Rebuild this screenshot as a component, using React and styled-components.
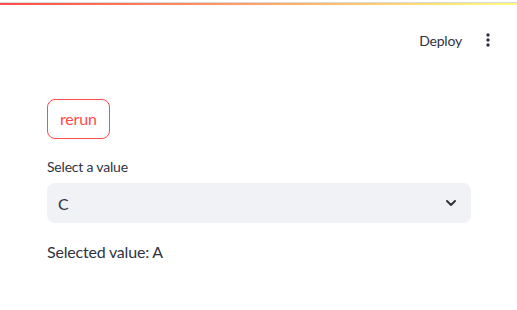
import styled, { createGlobalStyle } from "styled-components";

const Global = createGlobalStyle`
  html, body {
    margin: 0;
    padding: 0;
    background: #ffffff;
  }
  body {
    font-family: "Source Sans Pro", Lato, "Noto Sans", sans-serif;
    color: rgb(49, 51, 63);
    letter-spacing: -0.2px;
  }
`;

const Page = styled.div`
  width: 517px;
  min-height: 310px;
  display: flex;
  flex-direction: column;
`;

const Decoration = styled.div`
  height: 2px;
  margin-top: 2px;
  border-top: 1px solid #d8d8d8;
  background: linear-gradient(90deg, rgb(255, 75, 75), rgb(255, 253, 128));
`;

const Header = styled.header`
  height: 70px;
  display: flex;
  align-items: center;
  justify-content: flex-end;
  padding-right: 17px;
  gap: 6px;
  box-sizing: border-box;
`;

const HeaderButton = styled.button`
  border: none;
  background: none;
  font-family: inherit;
  letter-spacing: inherit;
  font-size: 14px;
  color: rgb(49, 51, 63);
  padding: 4px 8px;
  cursor: pointer;
`;

const Kebab = styled.button`
  border: none;
  background: none;
  width: 24px;
  height: 24px;
  display: flex;
  align-items: center;
  justify-content: center;
  padding: 0;
  color: rgb(49, 51, 63);
`;

const Main = styled.main`
  padding: 24px 46px 0 47px;
  display: flex;
  flex-direction: column;
`;

const RerunButton = styled.button`
  align-self: flex-start;
  height: 40px;
  padding: 0 12px;
  border: 1px solid rgb(255, 75, 75);
  border-radius: 8px;
  background: #ffffff;
  color: rgb(255, 75, 75);
  font-family: inherit;
  letter-spacing: inherit;
  font-size: 16px;
  line-height: 1.6;
`;

const Field = styled.div`
  margin-top: 17px;
  display: flex;
  flex-direction: column;
`;

const Label = styled.label`
  font-size: 14px;
  line-height: 22px;
  margin-bottom: 5px;
`;

const SelectBox = styled.div`
  height: 40px;
  border-radius: 8px;
  background: rgb(240, 242, 246);
  display: flex;
  align-items: center;
  justify-content: space-between;
  padding: 0 14px 0 11px;
  font-size: 16px;
`;

const Result = styled.p`
  margin: 17px 0 0;
  font-size: 16px;
  line-height: 24px;
`;

export default function App() {
  return (
    <Page>
      <Global />
      <Decoration />
      <Header>
        <HeaderButton>Deploy</HeaderButton>
        <Kebab aria-label="Main menu">
          <svg width="4" height="14" viewBox="0 0 4 14">
            <circle cx="2" cy="2" r="1.7" fill="currentColor" />
            <circle cx="2" cy="7" r="1.7" fill="currentColor" />
            <circle cx="2" cy="12" r="1.7" fill="currentColor" />
          </svg>
        </Kebab>
      </Header>
      <Main>
        <RerunButton>rerun</RerunButton>
        <Field>
          <Label>Select a value</Label>
          <SelectBox>
            <span>C</span>
            <svg width="12" height="8" viewBox="0 0 12 8">
              <polyline
                points="2,2 6,6 10,2"
                fill="none"
                stroke="rgb(49,51,63)"
                strokeWidth="2"
                strokeLinecap="round"
                strokeLinejoin="round"
              />
            </svg>
          </SelectBox>
        </Field>
        <Result>Selected value: A</Result>
      </Main>
    </Page>
  );
}
